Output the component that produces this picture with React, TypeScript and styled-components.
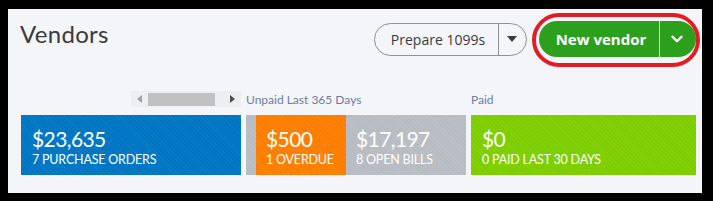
import styled, { createGlobalStyle } from 'styled-components';
import { ChevronDown } from 'lucide-react';

const GlobalStyle = createGlobalStyle`
  html, body {
    margin: 0;
    padding: 0;
    background: #000;
  }
  body {
    font-family: Lato, "Open Sans", sans-serif;
  }
`;

const cards = [
  { key: 'po', kind: 'blue', amount: '$23,635', label: '7 PURCHASE ORDERS' },
  { key: 'paid', kind: 'green', amount: '$0', label: '0 PAID LAST 30 DAYS' },
];

const App = () => {
  return (
    <>
      <GlobalStyle />
      <Panel>
        <Header>
          <Title>Vendors</Title>
          <Actions>
            <SplitButton>
              <SplitMain>Prepare 1099s</SplitMain>
              <SplitArrow>
                <svg width="10" height="6" viewBox="0 0 10 6">
                  <path d="M0 0h10L5 6z" fill="#393a3d" />
                </svg>
              </SplitArrow>
            </SplitButton>
            <Highlight>
              <PrimaryGroup>
                <PrimaryMain>New vendor</PrimaryMain>
                <PrimaryArrow>
                  <ChevronDown size={18} strokeWidth={3.2} color="#fff" />
                </PrimaryArrow>
              </PrimaryGroup>
            </Highlight>
          </Actions>
        </Header>

        <LabelRow>
          <Scroller>
            <ScrollBtn>
              <svg width="5" height="8" viewBox="0 0 5 8">
                <path d="M5 0v8L0 4z" fill="#a3a3a3" />
              </svg>
            </ScrollBtn>
            <Track>
              <Thumb />
            </Track>
            <ScrollBtn>
              <svg width="5" height="8" viewBox="0 0 5 8">
                <path d="M0 0v8l5-4z" fill="#505050" />
              </svg>
            </ScrollBtn>
          </Scroller>
          <Caption>Unpaid Last 365 Days</Caption>
          <Caption>Paid</Caption>
        </LabelRow>

        <Cards>
          <Card $kind="blue">
            <Amount>{cards[0].amount}</Amount>
            <CardLabel>{cards[0].label}</CardLabel>
          </Card>
          <UnpaidCard>
            <Segment $kind="orange">
              <Amount>$500</Amount>
              <CardLabel>1 OVERDUE</CardLabel>
            </Segment>
            <Segment $kind="gray">
              <Amount>$17,197</Amount>
              <CardLabel>8 OPEN BILLS</CardLabel>
            </Segment>
          </UnpaidCard>
          <Card $kind="green">
            <Amount>{cards[1].amount}</Amount>
            <CardLabel>{cards[1].label}</CardLabel>
          </Card>
        </Cards>
      </Panel>
    </>
  );
};

const colors: Record<string, string> = {
  blue: '#0077c5',
  orange: '#ff8000',
  gray: '#babec5',
  green: '#7fd000',
};

const hatch = `repeating-linear-gradient(45deg, rgba(255,255,255,0.035) 0 1px, rgba(0,0,0,0.015) 1px 3px)`;

const Panel = styled.div`
  box-sizing: border-box;
  margin: 9px 0 0 8px;
  width: 694px;
  height: 184px;
  background: #f4f5f8;
  padding: 0 6px 0 13px;
`;

const Header = styled.div`
  display: flex;
  justify-content: space-between;
  align-items: flex-start;
  padding-top: 10px;
  height: 82px;
  box-sizing: border-box;
`;

const Title = styled.h1`
  margin: 0 0 0 -1px;
  font-family: Lato, sans-serif;
  font-weight: 400;
  font-size: 24px;
  line-height: 30px;
  color: #393a3d;
  letter-spacing: 0.3px;
`;

const Actions = styled.div`
  display: flex;
  align-items: center;
  gap: 12px;
  margin-top: 2px;
`;

const SplitButton = styled.div`
  display: flex;
  height: 33px;
  box-sizing: border-box;
  border: 1px solid #8d9096;
  border-radius: 17px;
  overflow: hidden;
`;

const SplitMain = styled.button`
  width: 124px;
  border: none;
  background: transparent;
  font-family: "Open Sans", sans-serif;
  font-size: 14px;
  color: #393a3d;
  padding: 0 0 0 3px;
  border-right: 1px solid #8d9096;
`;

const SplitArrow = styled.button`
  width: 27px;
  border: none;
  background: transparent;
  display: flex;
  align-items: center;
  justify-content: center;
  padding: 0 2px 0 0;
`;

const Highlight = styled.div`
  position: relative;

  &::after {
    content: '';
    position: absolute;
    left: -7px;
    right: -4px;
    top: -8px;
    bottom: -10px;
    border: 4px solid #e31d25;
    border-radius: 28px;
    pointer-events: none;
  }
`;

const PrimaryGroup = styled.div`
  display: flex;
  height: 36px;
  background: #2ca01c;
  border-radius: 18px;
  overflow: hidden;
`;

const PrimaryMain = styled.button`
  width: 121px;
  border: none;
  background: transparent;
  color: #fff;
  font-family: "Open Sans", sans-serif;
  font-weight: 700;
  font-size: 15px;
  padding: 0 0 0 4px;
  border-right: 1px solid rgba(255, 255, 255, 0.85);
`;

const PrimaryArrow = styled.button`
  width: 36px;
  border: none;
  background: transparent;
  display: flex;
  align-items: center;
  justify-content: center;
  padding: 0 2px 0 0;
`;

const LabelRow = styled.div`
  display: grid;
  grid-template-columns: 220px 220px 225px;
  column-gap: 5px;
  align-items: center;
  height: 16px;
`;

const Scroller = styled.div`
  justify-self: end;
  width: 110px;
  height: 16px;
  display: flex;
  align-items: center;
  background: #eceef1;
`;

const ScrollBtn = styled.div`
  width: 17px;
  height: 16px;
  display: flex;
  align-items: center;
  justify-content: center;
`;

const Track = styled.div`
  flex: 1;
  height: 13px;
`;

const Thumb = styled.div`
  width: 67px;
  height: 100%;
  background: #c1c1c1;
`;

const Caption = styled.span`
  font-family: Lato, sans-serif;
  font-size: 12px;
  color: #6b7ca3;
`;

const Cards = styled.div`
  display: grid;
  grid-template-columns: 220px 220px 225px;
  column-gap: 5px;
  margin-top: 8px;
  height: 60px;
`;

const Card = styled.div<{ $kind: string }>`
  background: ${hatch}, ${(p) => colors[p.$kind]};
  padding: 12px 11px 0;
  color: #fff;
`;

const UnpaidCard = styled.div`
  display: flex;
  padding-left: 10px;
  background: ${hatch}, ${colors.gray};
`;

const Segment = styled.div<{ $kind: string }>`
  width: ${(p) => (p.$kind === 'orange' ? '90px' : 'auto')};
  flex: ${(p) => (p.$kind === 'orange' ? 'none' : '1')};
  background: ${(p) => (p.$kind === 'orange' ? `${hatch}, ${colors.orange}` : 'transparent')};
  padding: 12px 0 0 10px;
  box-sizing: border-box;
  color: #fff;
`;

const Amount = styled.div`
  font-family: Lato, sans-serif;
  font-size: 21px;
  line-height: 24px;
  letter-spacing: -0.6px;
`;

const CardLabel = styled.div`
  font-family: Lato, sans-serif;
  font-size: 12.5px;
  line-height: 16px;
  margin-top: 1px;
  letter-spacing: -0.2px;
`;

export default App;
